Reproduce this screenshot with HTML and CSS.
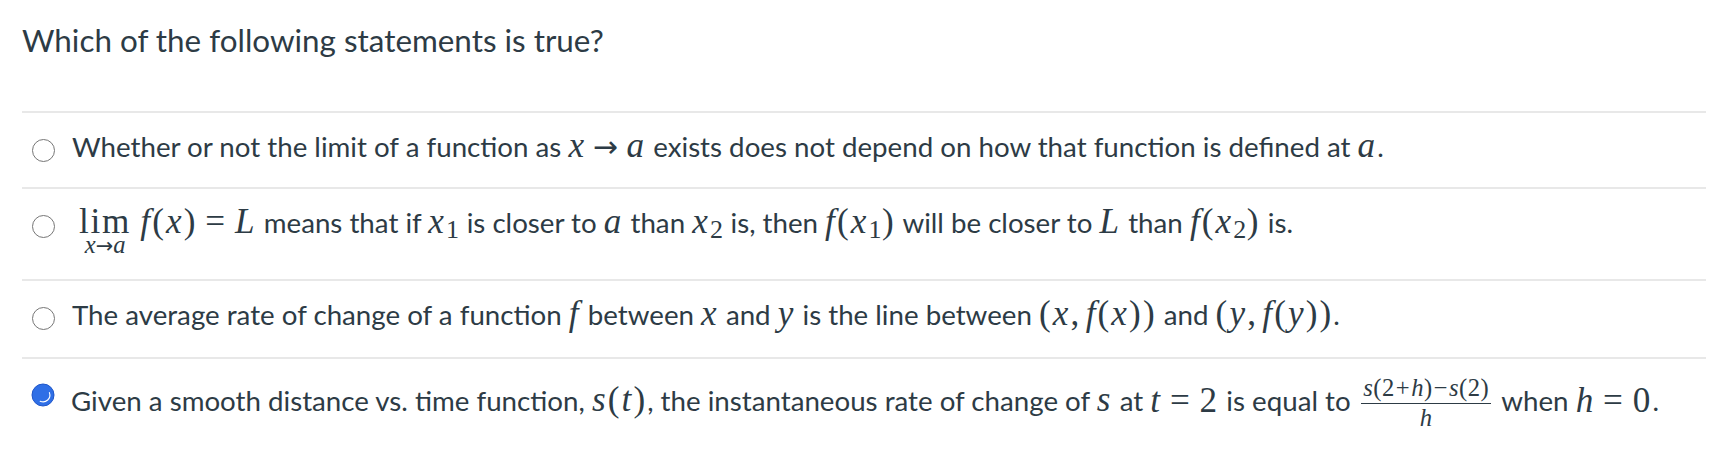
FILE: index.html
```html
<!DOCTYPE html>
<html>
<head>
<meta charset="utf-8">
<link rel="stylesheet" href="styles.css">
</head>
<body>
<div class="quiz">
  <h1 class="qtext">Which of the following statements is true?</h1>
  <div class="answers">
    <div class="answer">
      <span class="radio"></span>
      <div class="label">Whether or not the limit of a function as <span class="math"><span class="i">x</span><span class="rel arrow">→</span><span class="i">a</span></span> exists does not depend on how that function is defined at <span class="math"><span class="i">a</span></span>.</div>
    </div>
    <div class="answer">
      <span class="radio"></span>
      <div class="label"><span class="math"><span class="lim"><span class="limop">lim</span><span class="limsub"><span class="i">x</span><span class="arrow">→</span><span class="i">a</span></span></span><span class="op-gap"></span><span class="i">f</span>(<span class="i">x</span>)<span class="rel">=</span><span class="i">L</span></span> means that if <span class="math"><span class="i">x</span><span class="sub">1</span></span> is closer to <span class="math"><span class="i">a</span></span> than <span class="math"><span class="i">x</span><span class="sub">2</span></span> is, then <span class="math"><span class="i">f</span>(<span class="i">x</span><span class="sub">1</span>)</span> will be closer to <span class="math"><span class="i">L</span></span> than <span class="math"><span class="i">f</span>(<span class="i">x</span><span class="sub">2</span>)</span> is.</div>
    </div>
    <div class="answer tall">
      <span class="radio"></span>
      <div class="label">The average rate of change of a function <span class="math"><span class="i">f</span></span> between <span class="math"><span class="i">x</span></span> and <span class="math"><span class="i">y</span></span> is the line between <span class="math">(<span class="i">x</span><span class="punct">,</span><span class="i">f</span>(<span class="i">x</span>))</span> and <span class="math">(<span class="i">y</span><span class="punct">,</span><span class="i">f</span>(<span class="i">y</span>))</span>.</div>
    </div>
    <div class="answer last">
      <svg class="radio-on" width="24" height="24" viewBox="0 0 24 24">
        <circle cx="12" cy="12" r="11" fill="#2f6fe6" stroke="#2057c9" stroke-width="1"/>
        <path d="M18.4 9.6 A 6.8 6.8 0 0 1 9.2 18.2" fill="none" stroke="#ffffff" stroke-width="1.1" stroke-linecap="round"/>
      </svg>
      <div class="label">Given a smooth distance vs. time function, <span class="math"><span class="i">s</span>(<span class="i">t</span>)</span>, the instantaneous rate of change of <span class="math"><span class="i">s</span></span> at <span class="math"><span class="i">t</span><span class="rel">=</span>2</span> is equal to <span class="math"><span class="frac"><span class="num"><span class="i">s</span>(2<span class="bin">+</span><span class="i">h</span>)<span class="bin">−</span><span class="i">s</span>(2)</span><span class="bar"></span><span class="den"><span class="i">h</span></span></span></span> when <span class="math"><span class="i">h</span><span class="rel">=</span>0</span>.</div>
    </div>
  </div>
</div>
</body>
</html>
```

FILE: styles.css
```css
body {
  margin: 0;
  background: #ffffff;
  color: #2d3b45;
  font-family: Lato, "Open Sans", sans-serif;
}

.quiz {
  padding: 0 10px 0 22px;
}

.qtext {
  margin: 0 0 52px 0;
  padding-top: 21px;
  font-size: 31.4px;
  line-height: 38px;
  font-weight: 400;
}

.answer {
  display: flex;
  align-items: flex-start;
  border-top: 2px solid #e8e8e8;
  padding: 17px 0 24px 0;
}

.answer.tall {
  padding-bottom: 26px;
}

.radio {
  flex: none;
  box-sizing: border-box;
  width: 23px;
  height: 23px;
  margin: 9px 17px 0 10px;
  border: 1.6px solid #767676;
  border-radius: 50%;
  background: #fff;
}

.radio-on {
  flex: none;
  margin: 7px 16px 0 9px;
}

.label {
  font-size: 27.7px;
  line-height: 33px;
}

.math {
  font-family: "Liberation Serif", "Times New Roman", serif;
  font-size: 1.27em;
  line-height: 0.75;
  letter-spacing: 0.06em;
  white-space: nowrap;
}

.i {
  font-style: italic;
}

.arrow {
  font-family: "DejaVu Sans", sans-serif;
  font-size: 0.85em;
}

.rel {
  margin: 0 0.22em;
}

.bin {
  margin: 0 0.04em;
}

.punct {
  margin-right: 0.12em;
}

.sub {
  font-size: 0.74em;
  vertical-align: -0.2em;
  line-height: 0;
  letter-spacing: 0.02em;
}

.lim {
  display: inline-flex;
  flex-direction: column;
  align-items: center;
  vertical-align: baseline;
  margin-left: 7px;
}

.limop {
  line-height: 0.75;
  letter-spacing: 0.05em;
}

.limsub {
  font-size: 0.7em;
  line-height: 0.8;
  letter-spacing: 0;
}

.op-gap {
  display: inline-block;
  width: 0.26em;
}

.frac {
  display: inline-flex;
  flex-direction: column;
  align-items: center;
  vertical-align: middle;
  margin: 0 0.1em;
}

.num, .den {
  font-size: 0.7em;
  line-height: 1;
  padding: 0 2px;
  letter-spacing: 0.02em;
}

.bar {
  align-self: stretch;
  height: 1.5px;
  background: #2d3b45;
  margin: 2px 0;
}
```
